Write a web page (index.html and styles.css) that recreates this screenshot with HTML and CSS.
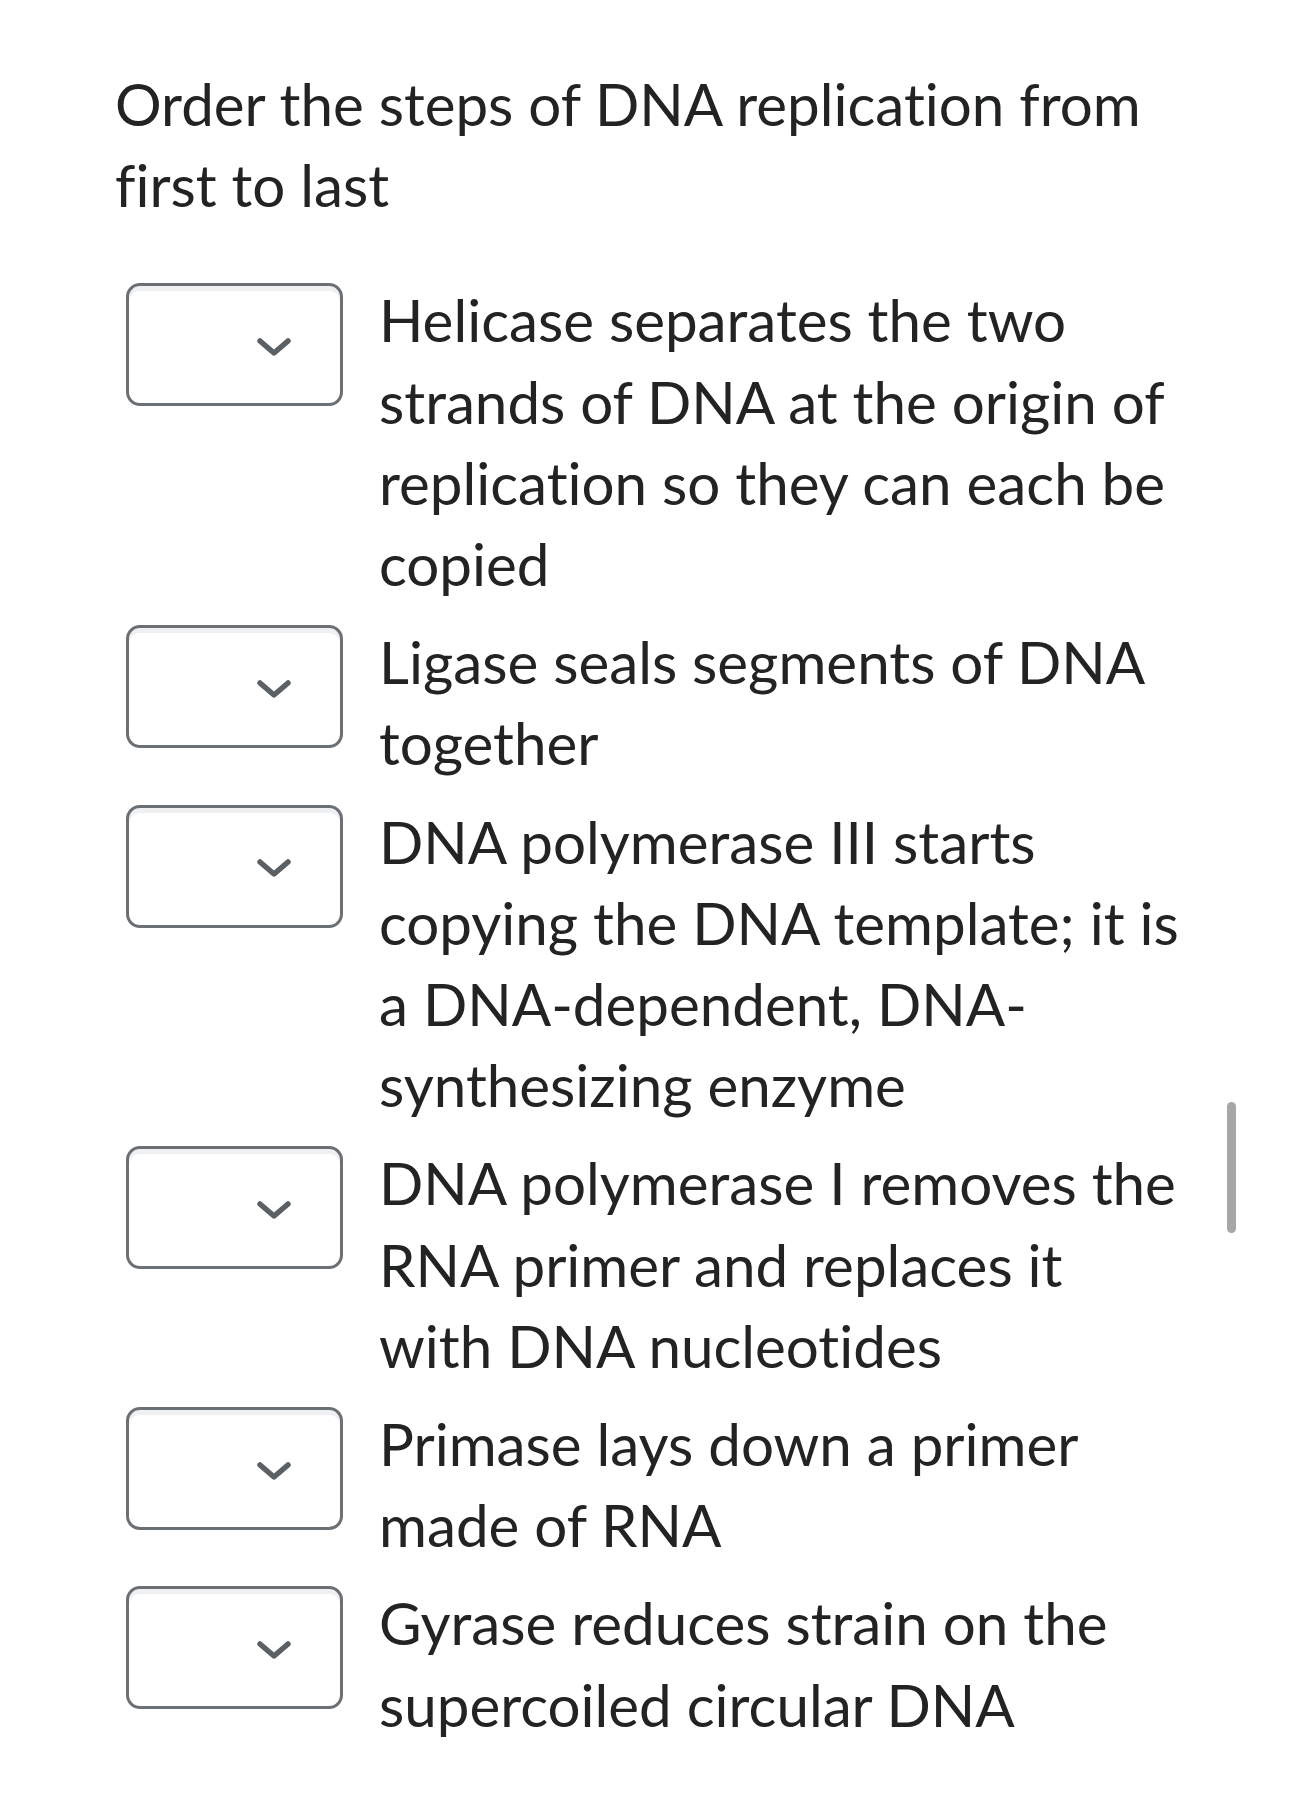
FILE: index.html
```html
<!DOCTYPE html>
<html lang="en">
<head>
<meta charset="utf-8">
<title>Order the steps of DNA replication</title>
<link rel="stylesheet" href="styles.css">
</head>
<body>
<main class="page">
  <p class="title">Order the steps of DNA replication from first to last</p>
  <div class="steps">
    <div class="step">
      <div class="select"><svg class="chev" viewBox="0 0 34 18" width="34" height="18"><polyline points="3,3 17,15 31,3"/></svg></div>
      <div class="label">Helicase separates the two strands of DNA at the origin of replication so they can each be copied</div>
    </div>
    <div class="step">
      <div class="select"><svg class="chev" viewBox="0 0 34 18" width="34" height="18"><polyline points="3,3 17,15 31,3"/></svg></div>
      <div class="label">Ligase seals segments of DNA together</div>
    </div>
    <div class="step">
      <div class="select"><svg class="chev" viewBox="0 0 34 18" width="34" height="18"><polyline points="3,3 17,15 31,3"/></svg></div>
      <div class="label">DNA polymerase III starts copying the DNA template; it is a DNA-dependent, DNA-synthesizing enzyme</div>
    </div>
    <div class="step">
      <div class="select"><svg class="chev" viewBox="0 0 34 18" width="34" height="18"><polyline points="3,3 17,15 31,3"/></svg></div>
      <div class="label">DNA polymerase I removes the RNA primer and replaces it with DNA nucleotides</div>
    </div>
    <div class="step">
      <div class="select"><svg class="chev" viewBox="0 0 34 18" width="34" height="18"><polyline points="3,3 17,15 31,3"/></svg></div>
      <div class="label">Primase lays down a primer made of RNA</div>
    </div>
    <div class="step">
      <div class="select"><svg class="chev" viewBox="0 0 34 18" width="34" height="18"><polyline points="3,3 17,15 31,3"/></svg></div>
      <div class="label">Gyrase reduces strain on the supercoiled circular DNA</div>
    </div>
  </div>
  <div class="scroll-thumb"></div>
</main>
</body>
</html>
```

FILE: styles.css
```css
html, body {
  margin: 0;
  padding: 0;
  background: #ffffff;
}

body {
  font-family: Lato, "Open Sans", "Liberation Sans", sans-serif;
  color: #222324;
  font-variant-ligatures: none;
  font-feature-settings: "liga" 0, "clig" 0;
}

.page {
  position: relative;
  min-height: 1803px;
  box-sizing: border-box;
  padding: 63px 0 0 115px;
}

.title {
  margin: 0;
  width: 1060px;
  font-size: 58.3px;
  line-height: 81.2px;
}

.steps {
  margin-top: 54px;
  margin-left: 11px;
  display: flex;
  flex-direction: column;
  gap: 17px;
}

.step {
  display: flex;
  align-items: flex-start;
  gap: 36px;
}

.select {
  flex: none;
  width: 217px;
  height: 123px;
  margin-top: 4px;
  box-sizing: border-box;
  border: 3px solid #6b7075;
  border-radius: 14px;
  background: #ffffff;
  box-shadow: inset 0 5px 0 0 #eef0f2;
  display: flex;
  align-items: center;
  justify-content: flex-end;
  padding: 4px 49px 0 0;
}

.chev {
  display: block;
}

.chev polyline {
  fill: none;
  stroke: #5b6065;
  stroke-width: 5.5;
  stroke-linecap: round;
  stroke-linejoin: round;
}

.label {
  flex: none;
  width: 800px;
  font-size: 58.3px;
  line-height: 81.2px;
}

.scroll-thumb {
  position: absolute;
  left: 1227px;
  top: 1102px;
  width: 9px;
  height: 131px;
  border-radius: 5px;
  background: #a7a7a7;
}
```
